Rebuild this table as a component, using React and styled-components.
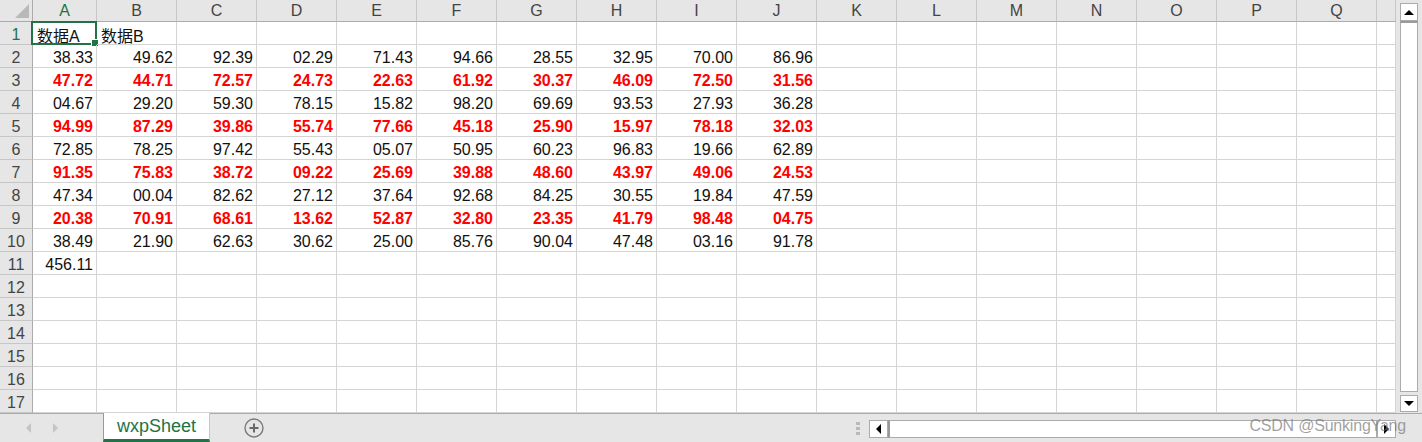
import React from "react"
import styled, { createGlobalStyle } from "styled-components"

const GlobalStyle = createGlobalStyle`
  html, body {
    margin: 0;
    padding: 0;
    background: #ffffff;
    overflow: hidden;
  }
  * {
    box-sizing: border-box;
  }
`

const COLS = "ABCDEFGHIJKLMNOPQ".split("")

const DATA = [
  ["38.33", "49.62", "92.39", "02.29", "71.43", "94.66", "28.55", "32.95", "70.00", "86.96"],
  ["47.72", "44.71", "72.57", "24.73", "22.63", "61.92", "30.37", "46.09", "72.50", "31.56"],
  ["04.67", "29.20", "59.30", "78.15", "15.82", "98.20", "69.69", "93.53", "27.93", "36.28"],
  ["94.99", "87.29", "39.86", "55.74", "77.66", "45.18", "25.90", "15.97", "78.18", "32.03"],
  ["72.85", "78.25", "97.42", "55.43", "05.07", "50.95", "60.23", "96.83", "19.66", "62.89"],
  ["91.35", "75.83", "38.72", "09.22", "25.69", "39.88", "48.60", "43.97", "49.06", "24.53"],
  ["47.34", "00.04", "82.62", "27.12", "37.64", "92.68", "84.25", "30.55", "19.84", "47.59"],
  ["20.38", "70.91", "68.61", "13.62", "52.87", "32.80", "23.35", "41.79", "98.48", "04.75"],
  ["38.49", "21.90", "62.63", "30.62", "25.00", "85.76", "90.04", "47.48", "03.16", "91.78"],
]

const Window = styled.div`
  width: 1422px;
  height: 442px;
  display: flex;
  flex-direction: column;
  background: #e6e6e6;
  font-family: "Liberation Sans", Arial, sans-serif;
`

const Top = styled.div`
  display: flex;
  height: 413px;
`

const Sheet = styled.div`
  display: grid;
  grid-template-columns: 33px 64px repeat(16, 80px) 19px;
  grid-template-rows: 22px repeat(17, 23px);
  width: 1396px;
  background: #ffffff;
  overflow: hidden;
`

const Corner = styled.div`
  position: relative;
  background: #e6e6e6;
  border-right: 1px solid #ababab;
  border-bottom: 1px solid #ababab;

  &::after {
    content: "";
    position: absolute;
    right: 3px;
    bottom: 3px;
    width: 0;
    height: 0;
    border-left: 14px solid transparent;
    border-bottom: 14px solid #b9b9b9;
  }
`

const ColHead = styled.div`
  background: #e6e6e6;
  border-right: 1px solid #c6c6c6;
  border-bottom: 1px solid #ababab;
  display: flex;
  align-items: center;
  justify-content: center;
  font-size: 16px;
  color: ${p => (p.$active ? "#217346" : "#444444")};
  padding-top: 1px;
`

const RowHead = styled.div`
  background: #e6e6e6;
  border-right: 1px solid #ababab;
  border-bottom: 1px solid #c6c6c6;
  display: flex;
  align-items: center;
  justify-content: center;
  padding-top: 3px;
  font-size: 16px;
  color: ${p => (p.$active ? "#217346" : "#444444")};
`

const Cell = styled.div`
  position: relative;
  border-right: 1px solid #d4d4d4;
  border-bottom: 1px solid #d4d4d4;
  display: flex;
  align-items: center;
  justify-content: ${p => (p.$left ? "flex-start" : "flex-end")};
  padding-top: 3px;
  padding-left: ${p => (p.$left ? "4px" : "0")};
  padding-right: ${p => (p.$left ? "0" : "3px")};
  font-size: 16px;
  white-space: nowrap;
  color: ${p => (p.$red ? "#ff0000" : "#111111")};
  font-weight: ${p => (p.$red ? 700 : 400)};
`

const CjkText = styled.span`
  font-family: "Liberation Sans", "Noto Sans CJK SC", sans-serif;
  font-size: 16px;
`

const Selection = styled.div`
  position: absolute;
  left: -2px;
  top: -1px;
  right: -1px;
  bottom: -1px;
  border: 2px solid #217346;
  pointer-events: none;

  &::after {
    content: "";
    position: absolute;
    right: -4px;
    bottom: -4px;
    width: 6px;
    height: 6px;
    background: #217346;
    border: 1px solid #ffffff;
  }
`

const ScrollV = styled.div`
  width: 26px;
  display: flex;
  flex-direction: column;
  padding: 3px 4px 1px 4px;
  background: #e6e6e6;
`

const ScrollBtn = styled.div`
  width: ${p => (p.$w ? p.$w + "px" : "auto")};
  height: ${p => (p.$h ? p.$h + "px" : "auto")};
  flex-shrink: 0;
  background: #ffffff;
  border: 1px solid #ababab;
  display: flex;
  align-items: center;
  justify-content: center;
`

const ThumbV = styled.div`
  flex: 1;
  background: #ffffff;
  border: 1px solid #ababab;
  border-top: 2px solid #9a9a9a;
  margin-bottom: 3px;
`

const Bottom = styled.div`
  position: relative;
  height: 29px;
  display: flex;
  align-items: stretch;
  background: #e6e6e6;
  border-top: 1px solid #ababab;
`

const Nav = styled.div`
  width: 103px;
  display: flex;
  align-items: center;
  padding-left: 26px;
  gap: 22px;
`

const Tab = styled.div`
  width: 107px;
  margin-top: -1px;
  background: #ffffff;
  border-left: 1px solid #9a9a9a;
  border-right: 1px solid #c6c6c6;
  border-bottom: 3px solid #217346;
  display: flex;
  align-items: center;
  justify-content: center;
  font-size: 18px;
  color: #217346;
  padding-top: 1px;
`

const AddSheet = styled.div`
  width: 88px;
  display: flex;
  align-items: center;
  justify-content: center;
`

const Spacer = styled.div`
  flex: 1;
`

const Dots = styled.div`
  width: 18px;
  display: flex;
  flex-direction: column;
  align-items: center;
  justify-content: center;
  gap: 2px;
  margin-right: 2px;

  span {
    width: 4px;
    height: 3px;
    background: #b9b9b9;
  }
`

const ScrollH = styled.div`
  width: 527px;
  display: flex;
  align-items: center;
  margin-top: 5px;
  margin-bottom: 4px;
  margin-right: 26px;
`

const ThumbH = styled.div`
  flex: 1;
  height: 18px;
  background: #ffffff;
  border: 1px solid #ababab;
  border-left: 2px solid #9a9a9a;
`

const Watermark = styled.div`
  position: absolute;
  right: 16px;
  top: 3px;
  font-size: 16px;
  color: rgba(120, 120, 120, 0.7);
  letter-spacing: -0.2px;
  pointer-events: none;
`

const Arrow = ({ dir, size = 4, color = "#000" }) => {
  const s = size
  const pts = {
    up: `0,${s} ${s},0 ${2 * s},${s}`,
    down: `0,0 ${2 * s},0 ${s},${s}`,
    left: `${s},0 ${s},${2 * s} 0,${s}`,
    right: `0,0 ${s},${s} 0,${2 * s}`,
  }[dir]
  const vertical = dir === "up" || dir === "down"
  return (
    <svg width={vertical ? 2 * s : s} height={vertical ? s : 2 * s}>
      <polygon points={pts} fill={color} />
    </svg>
  )
}

const PlusCircle = () => (
  <svg width="20" height="20" viewBox="0 0 20 20">
    <circle cx="10" cy="10" r="9" fill="none" stroke="#7a7a7a" strokeWidth="1.4" />
    <path d="M10 5.5 V14.5 M5.5 10 H14.5" stroke="#6a6a6a" strokeWidth="2" />
  </svg>
)

function cellFor(row, colIdx) {
  if (row === 1) {
    if (colIdx === 0)
      return { text: "数据A", left: true, cjk: true, selected: true }
    if (colIdx === 1) return { text: "数据B", left: true, cjk: true }
    return {}
  }
  if (row >= 2 && row <= 10 && colIdx < 10) {
    return { text: DATA[row - 2][colIdx], red: row % 2 === 1 }
  }
  if (row === 11 && colIdx === 0) return { text: "456.11" }
  return {}
}

export default function App() {
  const rows = Array.from({ length: 17 }, (_, i) => i + 1)
  return (
    <Window>
      <GlobalStyle />
      <Top>
        <Sheet>
          <Corner />
          {COLS.map((c, i) => (
            <ColHead key={c} $active={i === 0}>
              {c}
            </ColHead>
          ))}
          <ColHead />
          {rows.map(r => (
            <React.Fragment key={r}>
              <RowHead $active={r === 1}>{r}</RowHead>
              {COLS.map((c, i) => {
                const cell = cellFor(r, i)
                return (
                  <Cell key={c} $left={cell.left} $red={cell.red}>
                    {cell.cjk ? <CjkText>{cell.text}</CjkText> : cell.text}
                    {cell.selected && <Selection />}
                  </Cell>
                )
              })}
              <Cell />
            </React.Fragment>
          ))}
        </Sheet>
        <ScrollV>
          <ScrollBtn $h={18}>
            <Arrow dir="up" size={5} />
          </ScrollBtn>
          <ThumbV />
          <ScrollBtn $h={17}>
            <Arrow dir="down" size={5} />
          </ScrollBtn>
        </ScrollV>
      </Top>
      <Bottom>
        <Nav>
          <Arrow dir="left" size={5} color="#c4c4c4" />
          <Arrow dir="right" size={5} color="#c4c4c4" />
        </Nav>
        <Tab>wxpSheet</Tab>
        <AddSheet>
          <PlusCircle />
        </AddSheet>
        <Spacer />
        <Dots>
          <span />
          <span />
          <span />
        </Dots>
        <ScrollH>
          <ScrollBtn $w={19} $h={18}>
            <Arrow dir="left" size={5} />
          </ScrollBtn>
          <ThumbH />
          <ScrollBtn $w={19} $h={18}>
            <Arrow dir="right" size={5} />
          </ScrollBtn>
        </ScrollH>
        <Watermark>CSDN @SunkingYang</Watermark>
      </Bottom>
    </Window>
  )
}
